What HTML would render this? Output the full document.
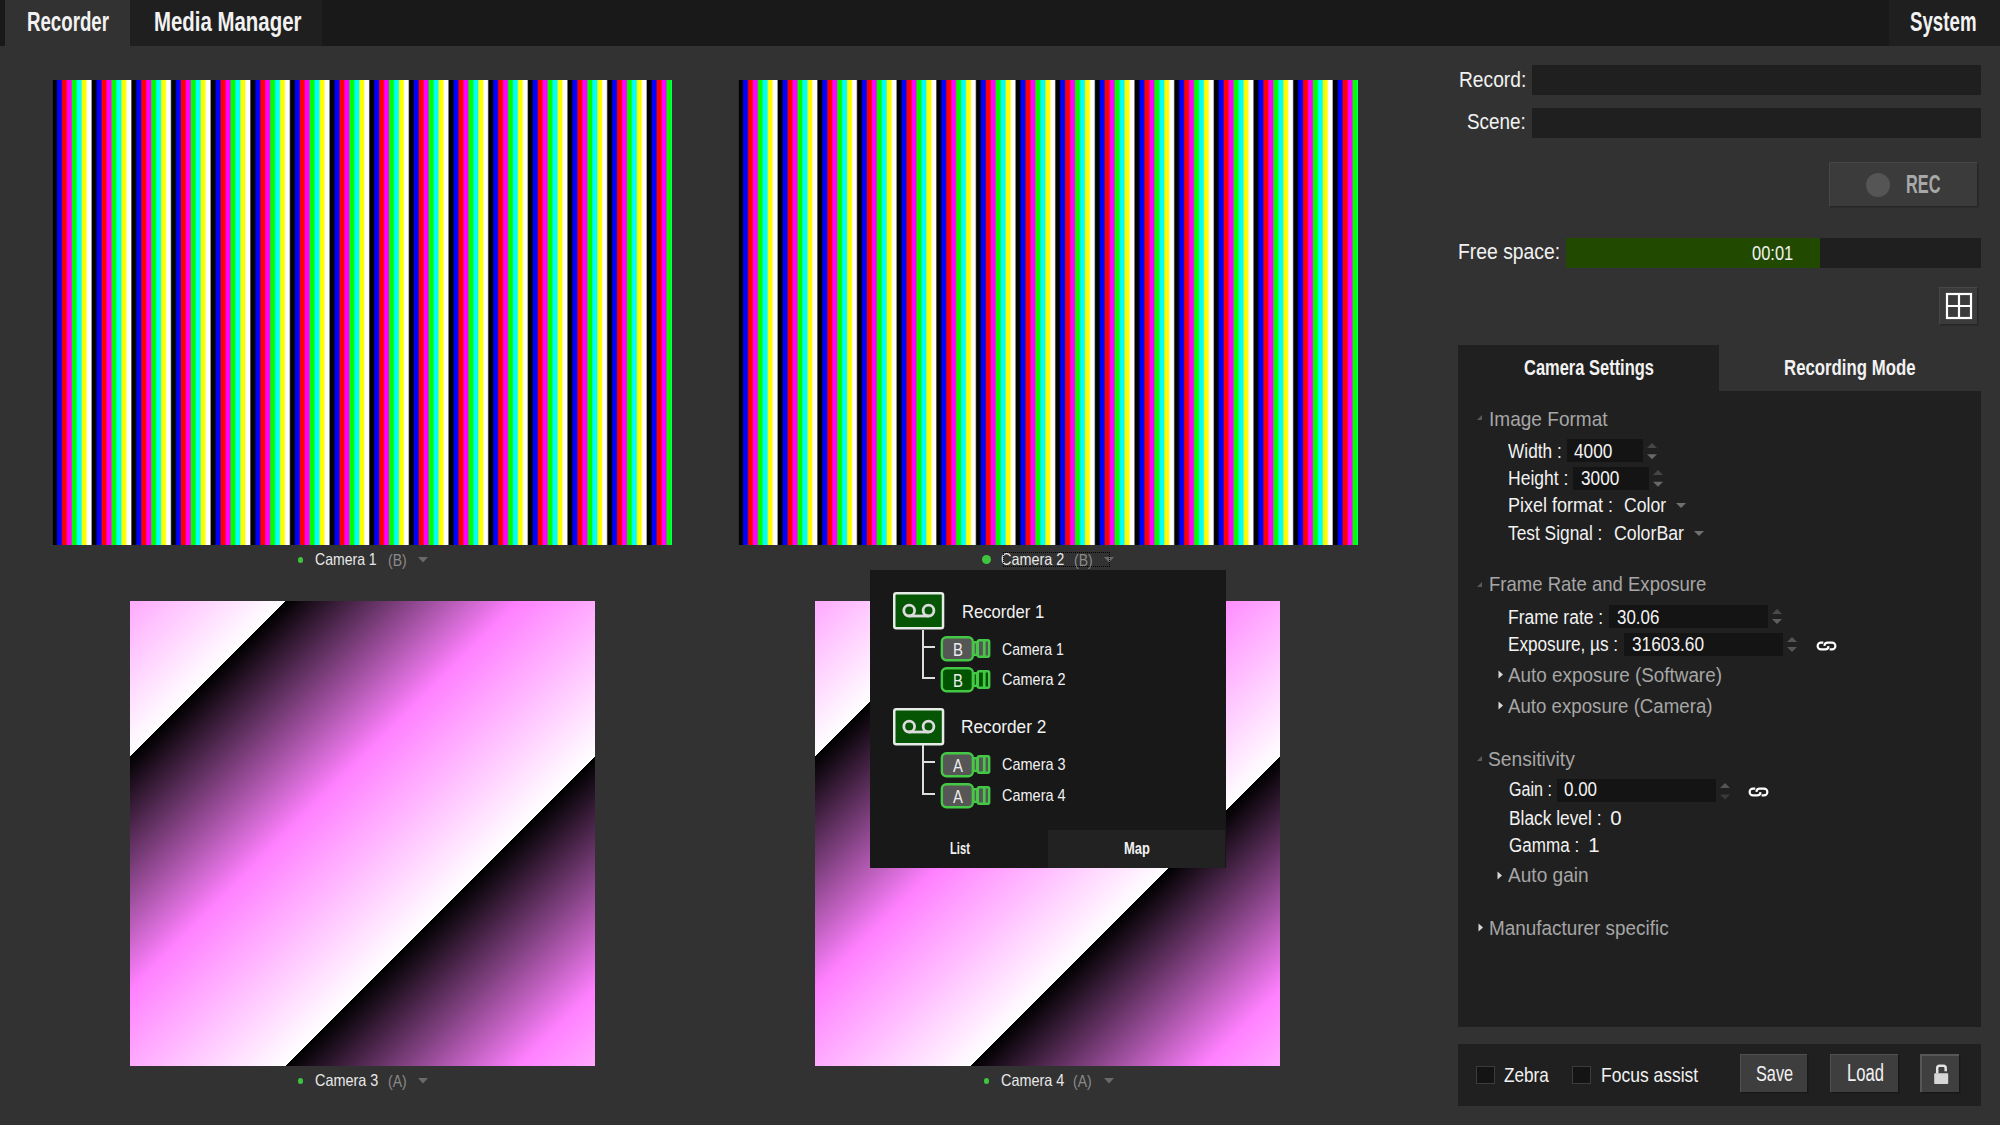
<!DOCTYPE html>
<html><head><meta charset="utf-8"><style>
html,body{margin:0;padding:0;}
body{width:2000px;height:1125px;overflow:hidden;background:#323232;position:relative;font-family:"Liberation Sans",sans-serif;}
.r{position:absolute;box-sizing:border-box;}
.t{position:absolute;white-space:nowrap;line-height:normal;transform-origin:0 0;}
</style></head><body>
<div class="r" style="left:0px;top:0px;width:2000px;height:46px;background:#191919;"></div>
<div class="r" style="left:5px;top:0px;width:125px;height:46px;background:#323232;"></div>
<div class="r" style="left:130px;top:0px;width:192px;height:46px;background:#1f1f1f;"></div>
<div class="r" style="left:1889px;top:0px;width:111px;height:46px;background:#1f1f1f;"></div>
<div class="t" style="left:27.20px;top:6.97px;font-size:26.74px;font-weight:700;color:#f2f2f2;transform:scaleX(0.6984);">Recorder</div>
<div class="t" style="left:153.70px;top:6.97px;font-size:26.74px;font-weight:700;color:#f2f2f2;transform:scaleX(0.7634);">Media Manager</div>
<div class="t" style="left:1910.00px;top:6.97px;font-size:26.74px;font-weight:700;color:#f2f2f2;transform:scaleX(0.6995);">System</div>
<div class="r" style="left:52px;top:80px;width:620px;height:465px;background:repeating-linear-gradient(90deg,#808080 0px,#000000 0.750px,#000000 4.206px,#0000ff 5.706px,#0000ff 9.162px,#ff0000 10.662px,#ff0000 14.119px,#ff00ff 15.619px,#ff00ff 19.075px,#00ff00 20.575px,#00ff00 24.031px,#00ffff 25.531px,#00ffff 28.987px,#ffff00 30.487px,#ffff00 33.944px,#ffffff 35.444px,#ffffff 38.900px,#808080 39.650px);"></div>
<div class="r" style="left:738px;top:80px;width:620px;height:465px;background:repeating-linear-gradient(90deg,#808080 0px,#000000 0.750px,#000000 4.206px,#0000ff 5.706px,#0000ff 9.162px,#ff0000 10.662px,#ff0000 14.119px,#ff00ff 15.619px,#ff00ff 19.075px,#00ff00 20.575px,#00ff00 24.031px,#00ffff 25.531px,#00ffff 28.987px,#ffff00 30.487px,#ffff00 33.944px,#ffffff 35.444px,#ffffff 38.900px,#808080 39.650px);"></div>
<div class="r" style="left:130px;top:601px;width:465px;height:465px;background:linear-gradient(135deg,#ffa9ff 0%,#ffffff 16.77%,#000000 16.77%,#ff80ff 41.77%,#ffffff 66.77%,#000000 66.77%,#ff80ff 91.77%,#ffa9ff 100%);"></div>
<div class="r" style="left:815px;top:601px;width:465px;height:465px;background:linear-gradient(135deg,#ffa9ff 0%,#ffffff 16.77%,#000000 16.77%,#ff80ff 41.77%,#ffffff 66.77%,#000000 66.77%,#ff80ff 91.77%,#ffa9ff 100%);"></div>
<div class="r" style="left:297.8px;top:557.4px;width:5.2px;height:5.2px;border-radius:50%;background:#3ec43e"></div>
<div class="t" style="left:315.30px;top:550.36px;font-size:16.72px;font-weight:400;color:#e8e8e8;transform:scaleX(0.8408);">Camera 1</div>
<div class="t" style="left:387.60px;top:551.58px;font-size:15.70px;font-weight:400;color:#8a8a8a;transform:scaleX(0.8923);">(B)</div>
<svg class="r" style="left:417.8px;top:557.0px" width="10" height="6"><path d="M0 0H10L5 5.5Z" fill="#6a6a6a"/></svg>
<div class="r" style="left:981.5px;top:555.0px;width:9.4px;height:9.4px;border-radius:50%;background:#3ec43e"></div>
<div class="t" style="left:1001.20px;top:550.36px;font-size:16.72px;font-weight:400;color:#e8e8e8;transform:scaleX(0.8640);">Camera 2</div>
<div class="t" style="left:1073.50px;top:551.58px;font-size:15.70px;font-weight:400;color:#8a8a8a;transform:scaleX(0.8923);">(B)</div>
<svg class="r" style="left:1103.5px;top:557.0px" width="10" height="6"><path d="M0 0H10L5 5.5Z" fill="#6a6a6a"/></svg>
<div class="r" style="left:297.8px;top:1078.4px;width:5.2px;height:5.2px;border-radius:50%;background:#3ec43e"></div>
<div class="t" style="left:315.30px;top:1071.36px;font-size:16.72px;font-weight:400;color:#e8e8e8;transform:scaleX(0.8640);">Camera 3</div>
<div class="t" style="left:387.60px;top:1072.58px;font-size:15.70px;font-weight:400;color:#8a8a8a;transform:scaleX(0.8923);">(A)</div>
<svg class="r" style="left:417.8px;top:1078.0px" width="10" height="6"><path d="M0 0H10L5 5.5Z" fill="#6a6a6a"/></svg>
<div class="r" style="left:983.6px;top:1078.4px;width:5.2px;height:5.2px;border-radius:50%;background:#3ec43e"></div>
<div class="t" style="left:1001.20px;top:1071.36px;font-size:16.72px;font-weight:400;color:#e8e8e8;transform:scaleX(0.8640);">Camera 4</div>
<div class="t" style="left:1073.30px;top:1072.58px;font-size:15.70px;font-weight:400;color:#8a8a8a;transform:scaleX(0.8923);">(A)</div>
<svg class="r" style="left:1103.5px;top:1078.0px" width="10" height="6"><path d="M0 0H10L5 5.5Z" fill="#6a6a6a"/></svg>
<div class="r" style="left:1003px;top:552px;width:107px;height:15px;border:1px dotted #000"></div>
<div class="t" style="left:1458.80px;top:66.19px;font-size:22.97px;font-weight:400;color:#f2f2f2;transform:scaleX(0.8361);">Record:</div>
<div class="t" style="left:1467.20px;top:108.19px;font-size:22.97px;font-weight:400;color:#f2f2f2;transform:scaleX(0.8220);">Scene:</div>
<div class="r" style="left:1532px;top:65px;width:449px;height:30px;background:#1f1f1f;"></div>
<div class="r" style="left:1532px;top:108px;width:449px;height:30px;background:#1f1f1f;"></div>
<div class="r" style="left:1829px;top:162px;width:148px;height:44px;background:#3b3b3b;border-top:1.5px solid #474747;border-left:1.5px solid #474747;box-shadow:1.5px 1.5px 0 #262626"></div>
<div class="r" style="left:1866.4px;top:172.9px;width:24px;height:24px;border-radius:50%;background:#555555"></div>
<div class="t" style="left:1906.40px;top:169.72px;font-size:25.58px;font-weight:700;color:#a8a8a8;transform:scaleX(0.6373);">REC</div>
<div class="t" style="left:1458.20px;top:238.72px;font-size:22.38px;font-weight:400;color:#f2f2f2;transform:scaleX(0.8647);">Free space:</div>
<div class="r" style="left:1566px;top:238px;width:415px;height:30px;background:#1f1f1f;"></div>
<div class="r" style="left:1566px;top:238px;width:253.5px;height:30px;background:#214a00;"></div>
<div class="t" style="left:1751.70px;top:241.99px;font-size:19.77px;font-weight:400;color:#f2f2f2;transform:scaleX(0.8340);">00:01</div>
<div class="r" style="left:1939px;top:287px;width:38px;height:37px;background:#3b3b3b;border-top:1.5px solid #474747;border-left:1.5px solid #474747;box-shadow:1.5px 1.5px 0 #262626"></div>
<svg class="r" style="left:1944.6px;top:292.2px" width="28" height="28"><g fill="none" stroke="#ffffff" stroke-width="2.2"><rect x="2" y="2" width="24" height="24"/><path d="M14 2V26M2 14H26"/></g></svg>
<div class="r" style="left:1458px;top:345px;width:261px;height:46px;background:#202020;"></div>
<div class="r" style="left:1458px;top:391px;width:523px;height:636px;background:#202020;"></div>
<div class="t" style="left:1524.00px;top:354.52px;font-size:22.38px;font-weight:700;color:#f2f2f2;transform:scaleX(0.7361);">Camera Settings</div>
<div class="t" style="left:1784.40px;top:354.52px;font-size:22.38px;font-weight:700;color:#f2f2f2;transform:scaleX(0.7504);">Recording Mode</div>
<svg class="r" style="left:1476.7px;top:415.2px" width="5" height="5"><path d="M5 0V5H0Z" fill="#5a5a5a"/></svg>
<div class="t" style="left:1489.00px;top:406.77px;font-size:20.78px;font-weight:400;color:#a6a6a6;transform:scaleX(0.9174);">Image Format</div>
<div class="t" style="left:1508.30px;top:439.56px;font-size:20.35px;font-weight:400;color:#f2f2f2;transform:scaleX(0.8485);">Width :</div>
<div class="r" style="left:1567px;top:439px;width:76px;height:23px;background:#141414;"></div>
<div class="t" style="left:1574.00px;top:439.56px;font-size:20.35px;font-weight:400;color:#f2f2f2;transform:scaleX(0.8481);">4000</div>
<svg class="r" style="left:1646.7px;top:442.7px" width="11" height="17.30000000000001"><path d="M0 5H10L5 0Z" fill="#464646"/><path d="M0 11.300000000000011H10L5 16.30000000000001Z" fill="#686868"/></svg>
<div class="t" style="left:1508.30px;top:466.56px;font-size:20.35px;font-weight:400;color:#f2f2f2;transform:scaleX(0.8616);">Height :</div>
<div class="r" style="left:1573px;top:466.7px;width:76px;height:23.0px;background:#141414;"></div>
<div class="t" style="left:1580.70px;top:466.56px;font-size:20.35px;font-weight:400;color:#f2f2f2;transform:scaleX(0.8459);">3000</div>
<svg class="r" style="left:1653px;top:470.2px" width="11" height="17.80000000000001"><path d="M0 5H10L5 0Z" fill="#464646"/><path d="M0 11.800000000000011H10L5 16.80000000000001Z" fill="#686868"/></svg>
<div class="t" style="left:1508.30px;top:494.26px;font-size:20.35px;font-weight:400;color:#f2f2f2;transform:scaleX(0.8843);">Pixel format :</div>
<div class="t" style="left:1624.30px;top:494.26px;font-size:20.35px;font-weight:400;color:#f2f2f2;transform:scaleX(0.8657);">Color</div>
<svg class="r" style="left:1676px;top:503px" width="11" height="6"><path d="M0 0H10L5 5Z" fill="#707070"/></svg>
<div class="t" style="left:1508.30px;top:521.56px;font-size:20.35px;font-weight:400;color:#f2f2f2;transform:scaleX(0.8520);">Test Signal :</div>
<div class="t" style="left:1614.00px;top:521.56px;font-size:20.35px;font-weight:400;color:#f2f2f2;transform:scaleX(0.8720);">ColorBar</div>
<svg class="r" style="left:1693.5px;top:531.3px" width="11" height="6"><path d="M0 0H10L5 5Z" fill="#707070"/></svg>
<svg class="r" style="left:1477px;top:581.5px" width="5" height="5"><path d="M5 0V5H0Z" fill="#5a5a5a"/></svg>
<div class="t" style="left:1489.00px;top:572.44px;font-size:20.93px;font-weight:400;color:#a6a6a6;transform:scaleX(0.8855);">Frame Rate and Exposure</div>
<div class="t" style="left:1508.40px;top:605.56px;font-size:20.35px;font-weight:400;color:#f2f2f2;transform:scaleX(0.8592);">Frame rate :</div>
<div class="r" style="left:1609px;top:605px;width:159px;height:23.399999999999977px;background:#141414;"></div>
<div class="t" style="left:1616.60px;top:605.56px;font-size:20.35px;font-weight:400;color:#f2f2f2;transform:scaleX(0.8318);">30.06</div>
<svg class="r" style="left:1771.6px;top:609.4px" width="11" height="16.0"><path d="M0 5H10L5 0Z" fill="#4a4a4a"/><path d="M0 10.0H10L5 15.0Z" fill="#5e5e5e"/></svg>
<div class="t" style="left:1508.40px;top:632.96px;font-size:20.35px;font-weight:400;color:#f2f2f2;transform:scaleX(0.8433);">Exposure, µs :</div>
<div class="r" style="left:1624px;top:633px;width:159px;height:23px;background:#141414;"></div>
<div class="t" style="left:1631.60px;top:632.96px;font-size:20.35px;font-weight:400;color:#f2f2f2;transform:scaleX(0.8485);">31603.60</div>
<svg class="r" style="left:1787px;top:637px" width="11" height="16"><path d="M0 5H10L5 0Z" fill="#555555"/><path d="M0 10H10L5 15Z" fill="#555555"/></svg>
<svg class="r" style="left:1814.5px;top:639.5px" width="24" height="13"><g transform="translate(1.5 1.5)" fill="none" stroke="#ffffff" stroke-width="2.1" stroke-linecap="butt"><path d="M6.8 1.1H4.5A3.4 3.4 0 0 0 4.5 7.9H8.6A3.4 3.4 0 0 0 12 4.6"/><path d="M7.9 4.4A3.4 3.4 0 0 1 11.3 1.1H15.5A3.4 3.4 0 0 1 15.5 7.9H13.1"/></g></svg>
<svg class="r" style="left:1497.5px;top:669.5px" width="6" height="9"><path d="M0.5 0.5L5 4.5L0.5 8.5Z" fill="#d8d8d8"/></svg>
<div class="t" style="left:1508.40px;top:663.56px;font-size:20.35px;font-weight:400;color:#a6a6a6;transform:scaleX(0.9274);">Auto exposure (Software)</div>
<svg class="r" style="left:1497.5px;top:700.5px" width="6" height="9"><path d="M0.5 0.5L5 4.5L0.5 8.5Z" fill="#d8d8d8"/></svg>
<div class="t" style="left:1508.40px;top:694.56px;font-size:20.35px;font-weight:400;color:#a6a6a6;transform:scaleX(0.9182);">Auto exposure (Camera)</div>
<svg class="r" style="left:1476.8px;top:755.5px" width="5" height="5"><path d="M5 0V5H0Z" fill="#5a5a5a"/></svg>
<div class="t" style="left:1488.00px;top:746.50px;font-size:20.64px;font-weight:400;color:#a6a6a6;transform:scaleX(0.9346);">Sensitivity</div>
<div class="t" style="left:1508.50px;top:778.16px;font-size:20.35px;font-weight:400;color:#f2f2f2;transform:scaleX(0.7914);">Gain :</div>
<div class="r" style="left:1556.7px;top:779.2px;width:159.29999999999995px;height:22.399999999999977px;background:#141414;"></div>
<div class="t" style="left:1564.20px;top:778.16px;font-size:20.35px;font-weight:400;color:#f2f2f2;transform:scaleX(0.8338);">0.00</div>
<svg class="r" style="left:1719.5px;top:782.6px" width="11" height="17.399999999999977"><path d="M0 5H10L5 0Z" fill="#555555"/><path d="M0 11.399999999999977H10L5 16.399999999999977Z" fill="#3a3a3a"/></svg>
<svg class="r" style="left:1747.0px;top:785.5px" width="24" height="13"><g transform="translate(1.5 1.5)" fill="none" stroke="#ffffff" stroke-width="2.1" stroke-linecap="butt"><path d="M6.8 1.1H4.5A3.4 3.4 0 0 0 4.5 7.9H8.6A3.4 3.4 0 0 0 12 4.6"/><path d="M7.9 4.4A3.4 3.4 0 0 1 11.3 1.1H15.5A3.4 3.4 0 0 1 15.5 7.9H13.1"/></g></svg>
<div class="t" style="left:1508.50px;top:806.56px;font-size:20.35px;font-weight:400;color:#f2f2f2;transform:scaleX(0.8521);">Black level :</div>
<div class="t" style="left:1610.30px;top:806.56px;font-size:20.35px;font-weight:400;color:#f2f2f2;transform:scaleX(1.0000);">0</div>
<div class="t" style="left:1508.50px;top:833.56px;font-size:20.35px;font-weight:400;color:#f2f2f2;transform:scaleX(0.8382);">Gamma :</div>
<div class="t" style="left:1588.30px;top:833.56px;font-size:20.35px;font-weight:400;color:#f2f2f2;transform:scaleX(1.0000);">1</div>
<svg class="r" style="left:1497.3px;top:870.5px" width="6" height="9"><path d="M0.5 0.5L5 4.5L0.5 8.5Z" fill="#d8d8d8"/></svg>
<div class="t" style="left:1508.20px;top:864.36px;font-size:20.35px;font-weight:400;color:#a6a6a6;transform:scaleX(0.9375);">Auto gain</div>
<svg class="r" style="left:1477.7px;top:923px" width="6" height="9"><path d="M0.5 0.5L5 4.5L0.5 8.5Z" fill="#d8d8d8"/></svg>
<div class="t" style="left:1489.00px;top:916.56px;font-size:20.35px;font-weight:400;color:#a6a6a6;transform:scaleX(0.9291);">Manufacturer specific</div>
<div class="r" style="left:1458px;top:1044px;width:523px;height:62px;background:#202020;"></div>
<div class="r" style="left:1475.8px;top:1065.8px;width:18.8px;height:18.2px;background:#141414;border:1px solid #3c3c3c"></div>
<div class="r" style="left:1572px;top:1065.8px;width:18.6px;height:18.2px;background:#141414;border:1px solid #3c3c3c"></div>
<div class="t" style="left:1504.40px;top:1063.63px;font-size:20.06px;font-weight:400;color:#f2f2f2;transform:scaleX(0.8541);">Zebra</div>
<div class="t" style="left:1601.00px;top:1063.63px;font-size:20.06px;font-weight:400;color:#f2f2f2;transform:scaleX(0.8724);">Focus assist</div>
<div class="r" style="left:1740px;top:1054px;width:66.5px;height:37.5px;background:#3e3e3e;border-top:1.5px solid #505050;border-left:1.5px solid #505050;box-shadow:1.5px 1.5px 0 #181818"></div>
<div class="r" style="left:1830px;top:1054px;width:67.5px;height:37.5px;background:#3e3e3e;border-top:1.5px solid #505050;border-left:1.5px solid #505050;box-shadow:1.5px 1.5px 0 #181818"></div>
<div class="r" style="left:1920.2px;top:1054px;width:39.299999999999955px;height:37.5px;background:#3f3f3f;border-top:2px solid #575757;border-left:2px solid #575757;box-shadow:1.5px 1.5px 0 #181818"></div>
<div class="t" style="left:1756.40px;top:1060.46px;font-size:22.67px;font-weight:400;color:#f2f2f2;transform:scaleX(0.7196);">Save</div>
<div class="t" style="left:1846.60px;top:1058.88px;font-size:24.42px;font-weight:400;color:#f2f2f2;transform:scaleX(0.6810);">Load</div>
<svg class="r" style="left:1930px;top:1060px" width="22" height="28"><g transform="translate(-1930 -1060)"><path d="M1937.2 1073.5V1068.2Q1937.2 1065.85 1939.6 1065.85H1943.3Q1945.7 1065.85 1945.7 1068.2V1071.2" fill="none" stroke="#e2e2e2" stroke-width="2.5"/><rect x="1934.2" y="1073.2" width="14" height="10.8" rx="0.8" fill="#d6d6d6"/></g></svg>
<div class="r" style="left:870px;top:570px;width:355.5px;height:297.5px;background:#181818"></div>
<div class="r" style="left:1047.7px;top:830px;width:177.29999999999995px;height:37.5px;background:#222222;"></div>
<div class="t" style="left:949.70px;top:838.59px;font-size:17.01px;font-weight:700;color:#f2f2f2;transform:scaleX(0.6574);">List</div>
<div class="t" style="left:1123.60px;top:838.59px;font-size:17.01px;font-weight:700;color:#f2f2f2;transform:scaleX(0.7615);">Map</div>
<svg class="r" style="left:892.5px;top:592.3px" width="52" height="38"><rect x="1.25" y="1.25" width="48.8" height="34.9" rx="2" fill="#055505" stroke="#e6ece6" stroke-width="2.5"/><g fill="none" stroke="#dcdcdc" stroke-width="2.8"><circle cx="16.2" cy="18.6" r="5.4"/><circle cx="35.5" cy="18.6" r="5.4"/><path d="M16.2 24H35.5"/></g></svg>
<div class="r" style="left:922px;top:630px;width:2px;height:49px;background:#dedede"></div>
<div class="r" style="left:922px;top:646px;width:13.2px;height:2px;background:#dedede"></div>
<div class="r" style="left:922px;top:677px;width:13.2px;height:2px;background:#dedede"></div>
<svg class="r" style="left:940px;top:636px" width="52" height="27"><g stroke="#45c845" stroke-width="2.4"><rect x="1.85" y="1.2" width="31" height="23" rx="4.5" fill="#565656"/><rect x="33.5" y="6.2" width="3.6" height="12.7" fill="#565656"/><rect x="37.8" y="4.2" width="11.4" height="16.6" rx="1.5" fill="#565656"/></g><rect x="42.9" y="4.5" width="2.7" height="16" fill="#45c845"/></svg>
<div class="t" style="left:953.10px;top:638.98px;font-size:18.90px;font-weight:400;color:#ececec;transform:scaleX(0.7879);">B</div>
<svg class="r" style="left:940px;top:667.3px" width="52" height="27"><g stroke="#45c845" stroke-width="2.4"><rect x="1.85" y="1.2" width="31" height="23" rx="4.5" fill="#005400"/><rect x="33.5" y="6.2" width="3.6" height="12.7" fill="#005400"/><rect x="37.8" y="4.2" width="11.4" height="16.6" rx="1.5" fill="#005400"/></g><rect x="42.9" y="4.5" width="2.7" height="16" fill="#45c845"/></svg>
<div class="t" style="left:953.10px;top:670.28px;font-size:18.90px;font-weight:400;color:#ececec;transform:scaleX(0.7879);">B</div>
<div class="t" style="left:961.80px;top:600.82px;font-size:19.19px;font-weight:400;color:#f2f2f2;transform:scaleX(0.8664);">Recorder 1</div>
<div class="t" style="left:1001.60px;top:639.59px;font-size:17.01px;font-weight:400;color:#f2f2f2;transform:scaleX(0.8278);">Camera 1</div>
<div class="t" style="left:1001.60px;top:670.29px;font-size:17.01px;font-weight:400;color:#f2f2f2;transform:scaleX(0.8519);">Camera 2</div>
<svg class="r" style="left:892.5px;top:707.7px" width="52" height="38"><rect x="1.25" y="1.25" width="48.8" height="34.9" rx="2" fill="#055505" stroke="#e6ece6" stroke-width="2.5"/><g fill="none" stroke="#dcdcdc" stroke-width="2.8"><circle cx="16.2" cy="18.6" r="5.4"/><circle cx="35.5" cy="18.6" r="5.4"/><path d="M16.2 24H35.5"/></g></svg>
<div class="r" style="left:922px;top:745px;width:2px;height:50px;background:#dedede"></div>
<div class="r" style="left:922px;top:760.6px;width:13.2px;height:2px;background:#dedede"></div>
<div class="r" style="left:922px;top:793px;width:13.2px;height:2px;background:#dedede"></div>
<svg class="r" style="left:940px;top:752px" width="52" height="27"><g stroke="#45c845" stroke-width="2.4"><rect x="1.85" y="1.2" width="31" height="23" rx="4.5" fill="#565656"/><rect x="33.5" y="6.2" width="3.6" height="12.7" fill="#565656"/><rect x="37.8" y="4.2" width="11.4" height="16.6" rx="1.5" fill="#565656"/></g><rect x="42.9" y="4.5" width="2.7" height="16" fill="#45c845"/></svg>
<div class="t" style="left:953.10px;top:754.98px;font-size:18.90px;font-weight:400;color:#ececec;transform:scaleX(0.7820);">A</div>
<svg class="r" style="left:940px;top:783.3px" width="52" height="27"><g stroke="#45c845" stroke-width="2.4"><rect x="1.85" y="1.2" width="31" height="23" rx="4.5" fill="#565656"/><rect x="33.5" y="6.2" width="3.6" height="12.7" fill="#565656"/><rect x="37.8" y="4.2" width="11.4" height="16.6" rx="1.5" fill="#565656"/></g><rect x="42.9" y="4.5" width="2.7" height="16" fill="#45c845"/></svg>
<div class="t" style="left:953.10px;top:786.28px;font-size:18.90px;font-weight:400;color:#ececec;transform:scaleX(0.7820);">A</div>
<div class="t" style="left:961.40px;top:716.22px;font-size:19.19px;font-weight:400;color:#f2f2f2;transform:scaleX(0.8980);">Recorder 2</div>
<div class="t" style="left:1001.60px;top:754.59px;font-size:17.01px;font-weight:400;color:#f2f2f2;transform:scaleX(0.8519);">Camera 3</div>
<div class="t" style="left:1001.60px;top:785.79px;font-size:17.01px;font-weight:400;color:#f2f2f2;transform:scaleX(0.8519);">Camera 4</div>
</body></html>
